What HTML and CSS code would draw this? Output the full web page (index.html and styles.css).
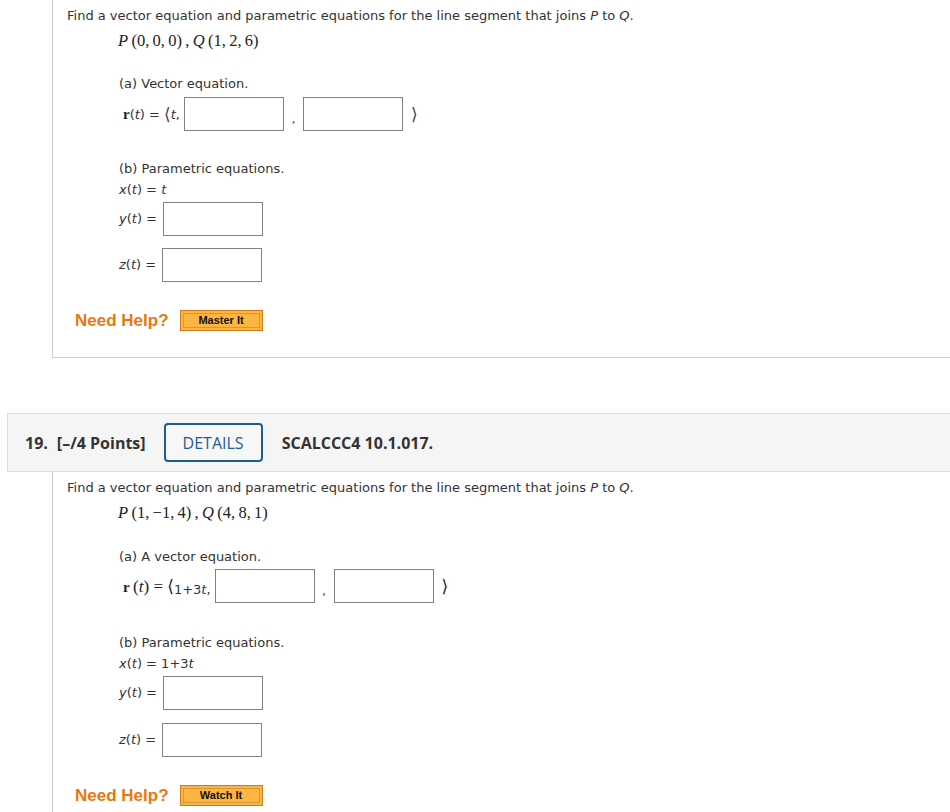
FILE: index.html
```html
<!DOCTYPE html>
<html>
<head>
<meta charset="utf-8">
<link rel="stylesheet" href="styles.css">
</head>
<body>
<div class="page">
  <div class="qbody first">
    <p class="prompt">Find a vector equation and parametric equations for the line segment that joins <i>P</i> to <i>Q</i>.</p>
    <p class="math pts"><i>P</i>&thinsp;(0,&thinsp;0,&thinsp;0)&thinsp;,&thinsp;<i>Q</i>&thinsp;(1,&thinsp;2,&thinsp;6)</p>
    <p class="part">(a) Vector equation.</p>
    <div class="vrow">
      <span class="vlabel"><b class="mr">r</b>(<i>t</i>) = <span class="ang">⟨</span><i>t</i>,</span>
      <span class="box"></span>
      <span class="comma">,</span>
      <span class="box"></span>
      <span class="ang close">⟩</span>
    </div>
    <p class="part partb">(b) Parametric equations.</p>
    <p class="eq"><i>x</i>(<i>t</i>) = <i>t</i></p>
    <div class="erow"><span class="elabel"><i>y</i>(<i>t</i>) =</span><span class="box"></span></div>
    <div class="erow"><span class="elabel"><i>z</i>(<i>t</i>) =</span><span class="box"></span></div>
    <div class="help"><span class="need">Need Help?</span><span class="hbtn">Master It</span></div>
  </div>

  <div class="qhead">
    <span class="qnum">19.</span>
    <span class="qpts">[–/4 Points]</span>
    <span class="details">DETAILS</span>
    <span class="qcode">SCALCCC4 10.1.017.</span>
  </div>

  <div class="qbody second">
    <p class="prompt">Find a vector equation and parametric equations for the line segment that joins <i>P</i> to <i>Q</i>.</p>
    <p class="math pts"><i>P</i>&thinsp;(1,&thinsp;−1,&thinsp;4)&thinsp;,&thinsp;<i>Q</i>&thinsp;(4,&thinsp;8,&thinsp;1)</p>
    <p class="part">(a) A vector equation.</p>
    <div class="vrow">
      <span class="vlabel"><span class="math"><b class="mr">r</b>&thinsp;(<i>t</i>) = ⟨</span><span class="low">1+3<i>t</i>,</span></span>
      <span class="box"></span>
      <span class="comma">,</span>
      <span class="box"></span>
      <span class="ang close">⟩</span>
    </div>
    <p class="part partb">(b) Parametric equations.</p>
    <p class="eq"><i>x</i>(<i>t</i>) = 1+3<i>t</i></p>
    <div class="erow"><span class="elabel"><i>y</i>(<i>t</i>) =</span><span class="box"></span></div>
    <div class="erow"><span class="elabel"><i>z</i>(<i>t</i>) =</span><span class="box"></span></div>
    <div class="help"><span class="need">Need Help?</span><span class="hbtn">Watch It</span></div>
  </div>
</div>
</body>
</html>
```

FILE: styles.css
```css
html, body {
  margin: 0;
  padding: 0;
  background: #ffffff;
}
body {
  font-family: "DejaVu Sans", Verdana, sans-serif;
  font-size: 13px;
  color: #333333;
  overflow: hidden;
}
p { margin: 0; }
.page {
  width: 950px;
}
.qbody {
  margin-left: 52px;
  border-left: 1px solid #cccccc;
  padding: 7px 0 0 14px;
}
.qbody.first {
  border-bottom: 1px solid #cccccc;
  padding-bottom: 26px;
}
.prompt {
  line-height: 18px;
  height: 18px;
}
.math {
  font-family: "Liberation Serif", "DejaVu Serif", serif;
  font-size: 16.5px;
  color: #222;
}
.pts {
  margin: 4px 0 0 51px;
  line-height: 24px;
  height: 24px;
}
.part {
  margin: 22px 0 0 52px;
  line-height: 18px;
}
.partb { margin-top: 29px; }
.vrow {
  display: flex;
  align-items: center;
  margin: 4px 0 0 56px;
  height: 34px;
}
.vlabel {
  display: inline-flex;
  align-items: center;
  white-space: pre;
  margin-right: 4px;
}
.mr {
  font-family: "Liberation Serif", serif;
  font-size: 15px;
  font-weight: bold;
  color: #222;
}
.ang {
  font-family: "DejaVu Serif", serif;
  font-size: 17px;
  font-weight: 200;
  color: #444;
}
.second .ang, .second .vlabel .math { color: #222; }
.second .vlabel .math { font-size: 17px; }
.low {
  font-size: 13px;
  position: relative;
  top: 3px;
}
.box {
  display: inline-block;
  box-sizing: border-box;
  width: 100px;
  height: 34px;
  border: 1px solid #808080;
  background: #ffffff;
}
.comma {
  width: 19px;
  text-align: center;
  padding-top: 8px;
  color: #555;
}
.close {
  margin-left: 8px;
}
.eq {
  margin: 3px 0 0 52px;
  line-height: 18px;
}
.erow {
  display: flex;
  align-items: center;
  margin: 2px 0 0 52px;
  height: 35px;
}
.erow + .erow { margin-top: 11px; }
.elabel {
  margin-right: 6px;
  white-space: pre;
}
.help {
  display: flex;
  align-items: center;
  margin: 28px 0 0 8px;
}
.need {
  font-family: "Liberation Sans", Arial, sans-serif;
  font-weight: bold;
  font-size: 17px;
  color: #e8780e;
  margin-right: 11px;
}
.hbtn {
  box-sizing: border-box;
  width: 83px;
  height: 21px;
  border: 1px solid #cf7a1e;
  background: #fbb540;
  box-shadow: inset 0 0 0 2px #fbb540, inset 0 0 0 3px #d9973a;
  font-family: "Liberation Sans", Arial, sans-serif;
  font-weight: bold;
  font-size: 11px;
  color: #111;
  text-align: center;
  line-height: 19px;
}
.qhead {
  margin: 55px 0 0 7px;
  height: 57px;
  border: 1px solid #dddddd;
  border-right: none;
  background: #f5f5f5;
  display: flex;
  align-items: center;
  font-family: "Open Sans", sans-serif;
  font-size: 16px;
  color: #333333;
}
.qnum {
  font-weight: bold;
  margin-left: 17px;
  margin-right: 9px;
}
.qpts {
  font-weight: bold;
}
.details {
  box-sizing: border-box;
  width: 99px;
  height: 39px;
  margin-left: 18px;
  border: 2px solid #1e5e8e;
  border-radius: 4px;
  color: #1e5e8e;
  display: flex;
  align-items: center;
  justify-content: center;
  background: #f7f7f7;
}
.qcode {
  font-weight: bold;
  margin-left: 19px;
}
.qbody.second {
  padding-top: 7px;
  padding-bottom: 20px;
}
.second .part { margin-top: 23px; }
.second .vrow { margin-top: 3px; }
.second .partb { margin-top: 31px; }
.second .erow { margin-top: 2px; }
.second .erow + .erow { margin-top: 12px; }
.second .help { margin-top: 28px; }
```
